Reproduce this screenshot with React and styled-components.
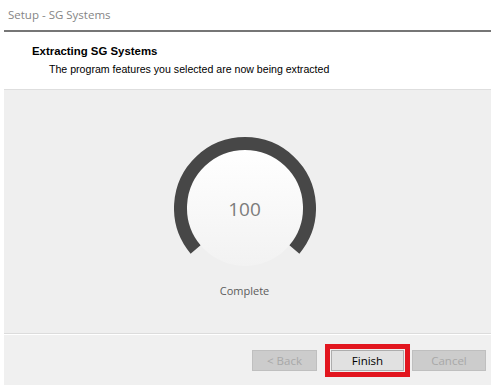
import React from "react";
import styled, { createGlobalStyle } from "styled-components";

const Global = createGlobalStyle`
  html, body {
    margin: 0;
    padding: 0;
    background: #ffffff;
  }
  body {
    width: 495px;
    height: 385px;
    overflow: hidden;
    font-family: "Liberation Sans", Arial, sans-serif;
  }
`;

const Window = styled.div`
  width: 495px;
  height: 385px;
  display: flex;
  flex-direction: column;
  background: #ffffff;
`;

const TitleBar = styled.div`
  height: 30px;
  line-height: 30px;
  padding-left: 8px;
  font-family: "Open Sans", "Noto Sans", sans-serif;
  font-size: 11.5px;
  color: #858585;
`;

const Frame = styled.div`
  margin: 0 4px;
  flex: 1;
  display: flex;
  flex-direction: column;
  border-top: 2px solid #767676;
`;

const Header = styled.div`
  height: 58px;
  box-sizing: border-box;
  padding: 13px 0 0 28px;
  background: #ffffff;
  border-bottom: 1px solid #dedede;
  color: #000;
  line-height: 13px;
`;

const HeaderTitle = styled.div`
  font-weight: bold;
  font-size: 11.4px;
`;

const HeaderSub = styled.div`
  margin-top: 5px;
  padding-left: 17px;
  font-size: 10.6px;
`;

const Body = styled.div`
  height: 244px;
  background: #efefef;
  display: flex;
  flex-direction: column;
  align-items: center;
  padding: 47px 6px 0 0;
  box-sizing: border-box;
  border-bottom: 1px solid #dcdcdc;
`;

const GaugeWrap = styled.div`
  position: relative;
  width: 142px;
  height: 142px;
`;

const GaugeValue = styled.div`
  position: absolute;
  inset: 0;
  padding-top: 2px;
  display: flex;
  align-items: center;
  justify-content: center;
  font-family: "Open Sans", "Noto Sans", sans-serif;
  font-size: 19px;
  color: #7c7c7c;
`;

const Caption = styled.div`
  margin-top: 4px;
  font-family: "Open Sans", "Noto Sans", sans-serif;
  font-size: 11px;
  color: #5c5c5c;
`;

const Footer = styled.div`
  flex: 1;
  border-top: 1px solid #ffffff;
  background: #f0f0f0;
  display: flex;
  justify-content: flex-end;
  align-items: flex-start;
  padding: 15px 5px 0 0;
`;

const Button = styled.button`
  width: ${(p) => p.$w}px;
  height: 21px;
  margin-left: ${(p) => p.$gap}px;
  padding: 0;
  font-family: "Open Sans", "Noto Sans", sans-serif;
  font-size: 11.5px;
  border: 1px solid ${(p) => (p.disabled ? "#bfbfbf" : "#adadad")};
  background: ${(p) => (p.disabled ? "#cccccc" : "#e1e1e1")};
  color: ${(p) => (p.disabled ? "#a8a8a8" : "#000000")};
  outline: ${(p) => (p.$marked ? "5px solid #e2161f" : "none")};
  outline-offset: 1px;
`;

const Gauge = () => (
  <GaugeWrap>
    <svg width="142" height="142" viewBox="0 0 142 142">
      <defs>
        <linearGradient id="disc" x1="0" y1="0" x2="0" y2="1">
          <stop offset="0" stopColor="#ffffff" />
          <stop offset="1" stopColor="#f2f2f2" />
        </linearGradient>
      </defs>
      <circle cx="71" cy="71" r="58" fill="url(#disc)" />
      <path
        d="M 21.6 112.5 A 64.5 64.5 0 1 1 120.4 112.5"
        fill="none"
        stroke="#474747"
        strokeWidth="13"
      />
    </svg>
    <GaugeValue>100</GaugeValue>
  </GaugeWrap>
);

export default function App() {
  return (
    <Window>
      <Global />
      <TitleBar>Setup - SG Systems</TitleBar>
      <Frame>
        <Header>
          <HeaderTitle>Extracting SG Systems</HeaderTitle>
          <HeaderSub>The program features you selected are now being extracted</HeaderSub>
        </Header>
        <Body>
          <Gauge />
          <Caption>Complete</Caption>
        </Body>
        <Footer>
          <Button $w={65} $gap={0} disabled>
            &lt; Back
          </Button>
          <Button $w={73} $gap={14} $marked>
            Finish
          </Button>
          <Button $w={74} $gap={8} disabled>
            Cancel
          </Button>
        </Footer>
      </Frame>
    </Window>
  );
}
